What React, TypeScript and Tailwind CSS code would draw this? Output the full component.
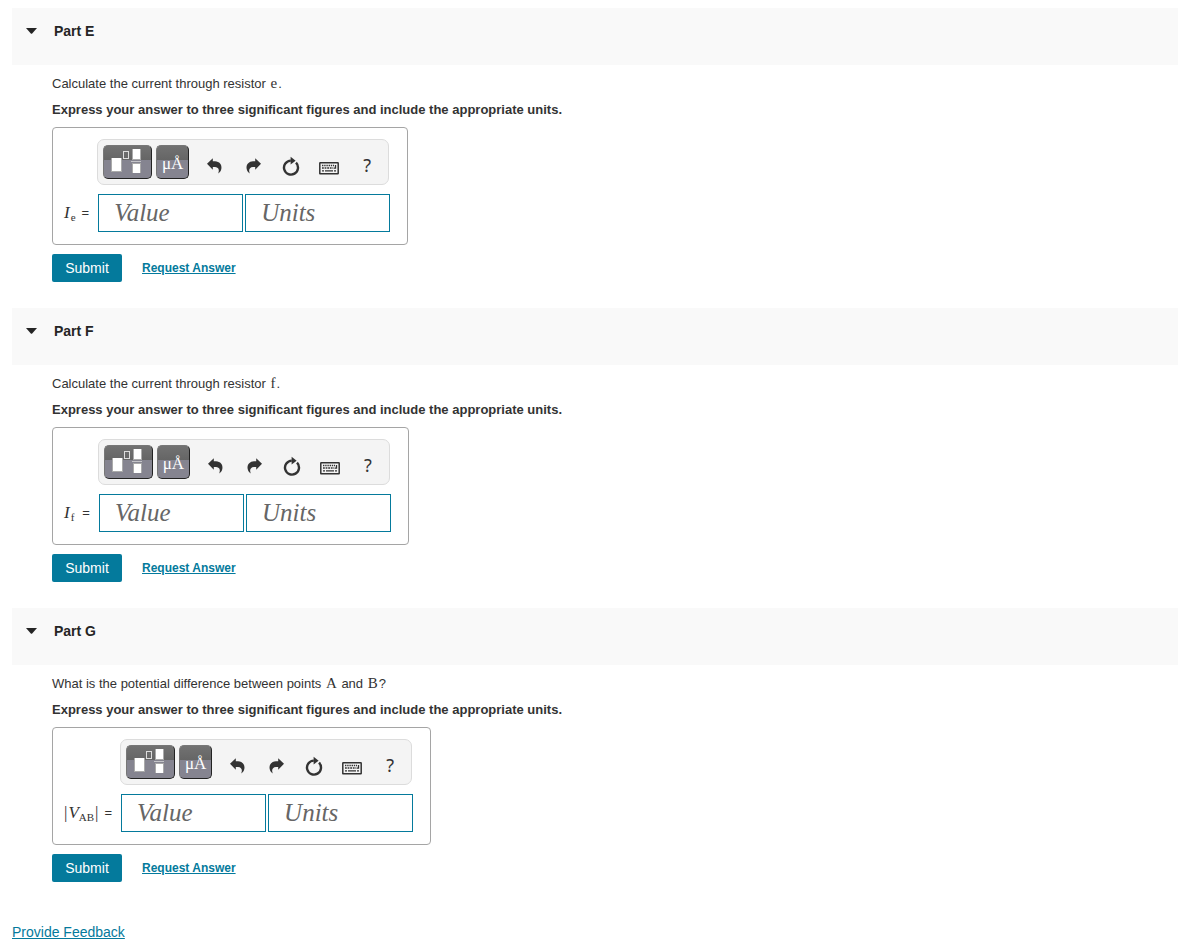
import { ReactNode } from "react";

interface Part {
    id: string;
    title: string;
    question: ReactNode;
    label: ReactNode;
}

function MathText({ children }: { children: ReactNode }) {
    return <span className="px-px font-['Liberation_Serif',serif] text-[15px] leading-4">{children}</span>;
}

function Sub({ children }: { children: ReactNode }) {
    return <sub className="static align-[-3px] text-[11px] leading-none">{children}</sub>;
}

const parts: Part[] = [
    {
        id: "e",
        title: "Part E",
        question: <>Calculate the current through resistor <MathText>e</MathText>.</>,
        label: <><i className="mr-px">I</i><Sub>e</Sub></>,
    },
    {
        id: "f",
        title: "Part F",
        question: <>Calculate the current through resistor <MathText>f</MathText>.</>,
        label: <><i className="mr-px">I</i><Sub>f</Sub><span className="pl-0.5" /></>,
    },
    {
        id: "g",
        title: "Part G",
        question: <>What is the potential difference between points <MathText>A</MathText> and <MathText>B</MathText>?</>,
        label: <>|<span className="px-px"><i>V</i><Sub>AB</Sub></span>|</>,
    },
];

function ArrowIcon({ flipped = false }: { flipped?: boolean }) {
    return (
        <svg width="20" height="20" viewBox="0 0 20 20" fill="#333">
            <path
                transform={flipped ? "translate(20 0) scale(-1 1)" : undefined}
                d="M2 7.8 7.8 2.3V5.2H10C14.4 5.4 17 8.6 16.4 12.6 16 15 15 16.6 13.2 17.5 14.6 14.4 13.8 11.3 10 11.1H7.8V13.8Z"
            />
        </svg>
    );
}

function ResetIcon() {
    return (
        <svg width="20" height="20" viewBox="0 0 20 20" fill="none">
            <path d="M9.8 4.6A7 7 0 1 0 15 6.7" stroke="#333" strokeWidth="2.4" />
            <path d="M9.6 .8 14.6 4.7 9.6 8.4Z" fill="#333" />
        </svg>
    );
}

function KeyboardIcon() {
    return (
        <svg width="20" height="20" viewBox="0 0 20 20" fill="none" stroke="#333">
            <rect x=".8" y="6.8" width="18.4" height="11" rx=".4" strokeWidth="1.5" />
            <path d="M3 9.5h12" strokeWidth="1.4" strokeDasharray="1.4 .8" />
            <path d="M3 12h11" strokeWidth="1.4" strokeDasharray="1.8 .8" />
            <path d="M3 14.8h2M6 14.8h8M15 14.8h2M14.5 12.2h2V9" strokeWidth="1.3" />
        </svg>
    );
}

function TemplatesIcon() {
    return (
        <svg width="47" height="32" viewBox="0 0 47 32">
            <path d="M7 12h11v14H7zM28 3h9v11h-9zM28 17h9v10h-9z" fill="#aaa" />
            <path d="M8 12h9v13H8zM29 3h7v10h-7zM29 18h7v9h-7z" fill="#fff" />
            <path d="M27 15.5h10" stroke="#c4c4c8" />
            <rect x="19.5" y="5.5" width="5" height="7" fill="none" stroke="#ddd" />
        </svg>
    );
}

function Toolbar() {
    const darkButton =
        "flex h-[34px] items-center justify-center rounded-[5px] border border-t-[#777] border-r-[#222] border-b-[#222] border-l-[#777] bg-linear-to-b from-[#727272] from-0% via-[#656565] via-44% to-[#858490] to-44% text-white";
    const toolButton = "flex h-[34px] w-[38px] items-center justify-center";

    return (
        <div className="flex h-[46px] w-[292px] items-center rounded-[7px] border border-[#dcdcdc] bg-[#f4f4f4] pl-[5px]">
            <button aria-label="Templates" className={`${darkButton} mr-1 w-[49px]`}>
                <TemplatesIcon />
            </button>
            <button aria-label="Symbols" className={`${darkButton} mr-[7px] w-[33px] pt-1 font-['Liberation_Serif',serif] text-[17px]`}>
                μÅ
            </button>
            <button aria-label="Undo" className={`${toolButton} pt-2`}><ArrowIcon /></button>
            <button aria-label="Redo" className={`${toolButton} pt-2`}><ArrowIcon flipped /></button>
            <button aria-label="Reset" className={`${toolButton} pt-2`}><ResetIcon /></button>
            <button aria-label="Keyboard shortcuts" className={`${toolButton} pt-2`}><KeyboardIcon /></button>
            <button aria-label="Help" className={`${toolButton} pt-1.5 font-['Noto_Sans',sans-serif] text-lg text-[#333]`}>?</button>
        </div>
    );
}

function AnswerBox({ part }: { part: Part }) {
    const field =
        "h-[38px] w-[145px] border border-[#047a9c] bg-white px-[15px] font-['Liberation_Serif',serif] text-[25px] italic text-[#333] placeholder:text-[#666]";

    return (
        <div className="grid w-fit grid-cols-[auto_auto] gap-y-[9px] rounded border border-[#a5a5a5] pt-[11px] pr-[17px] pb-3 pl-[11px]">
            <div className="col-start-2">
                <Toolbar />
            </div>
            <label htmlFor={`value-${part.id}`} className="col-start-1 flex items-center pr-2 text-[13px] text-[#333]">
                <span className="mr-1.5 font-['Liberation_Serif',serif] text-[17px] leading-5">{part.label}</span>
                =
            </label>
            <div className="flex gap-0.5 pl-px">
                <input id={`value-${part.id}`} placeholder="Value" className={field} />
                <input aria-label="Units" placeholder="Units" className={field} />
            </div>
        </div>
    );
}

function PartSection({ part }: { part: Part }) {
    return (
        <section className="mb-[26px]">
            <header className="flex h-[57px] items-start bg-[#f9f9f9] pt-[13px] pl-3.5">
                <button className="flex items-center gap-[17px] text-sm font-bold text-[#252525]">
                    <svg width="11" height="6" viewBox="0 0 11 6" fill="currentColor">
                        <path d="M0 0h11L6.2 5.4a1 1 0 0 1-1.4 0Z" />
                    </svg>
                    {part.title}
                </button>
            </header>
            <div className="pl-10 text-[13px] text-[#333]">
                <p className="pt-[9px] leading-5">{part.question}</p>
                <p className="mt-1.5 mb-[7px] leading-5 font-bold">Express your answer to three significant figures and include the appropriate units.</p>
                <AnswerBox part={part} />
                <div className="mt-[9px] flex items-center gap-5">
                    <button className="h-7 w-[70px] rounded-xs bg-[#047a9c] text-sm text-white">Submit</button>
                    <a href="#" className="text-xs font-bold text-[#047a9c] underline">Request Answer</a>
                </div>
            </div>
        </section>
    );
}

export default function App() {
    return (
        <main className="bg-white pt-2 pb-2 pl-3 font-['Liberation_Sans',Arial,sans-serif]">
            {parts.map((part) => (
                <PartSection key={part.id} part={part} />
            ))}
            <a href="#" className="mt-10 block w-fit text-sm text-[#047a9c] underline">Provide Feedback</a>
        </main>
    );
}
